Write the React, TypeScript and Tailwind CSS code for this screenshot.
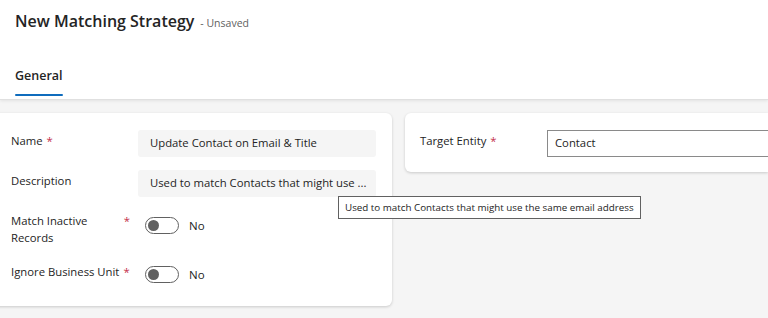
import React from "react";

const font = { fontFamily: '"Open Sans", "Noto Sans", sans-serif' };

const Star = () => <span className="text-[#c4314b] ml-1">*</span>;

const Toggle = () => (
  <div className="flex items-center gap-[10px] ml-[7px]">
    <div className="w-[34px] h-[17px] rounded-full border border-[#616161] bg-white flex items-center px-[2px]">
      <div className="w-[11px] h-[11px] rounded-full bg-[#616161]" />
    </div>
    <span className="text-[11.5px] text-[#242424]">No</span>
  </div>
);

export default function App() {
  return (
    <div className="w-[768px] h-[318px] overflow-hidden bg-[#f5f5f5] text-[#242424]" style={font}>
      <div className="bg-white h-[100px] border-b border-[#e0e0e0] shadow-[0_1px_3px_rgba(0,0,0,0.08)] px-[15px] pt-[9px]">
        <div className="flex items-baseline gap-[6px]">
          <span className="text-[16px] font-semibold">New Matching Strategy</span>
          <span className="text-[10.5px] text-[#616161]">- Unsaved</span>
        </div>
        <div className="mt-[34px] inline-flex flex-col">
          <span className="text-[12.5px] font-semibold leading-[18px]">General</span>
          <div className="mt-[9px] h-[2px] bg-[#0f6cbd] rounded-full" />
        </div>
      </div>

      <div className="flex gap-[13px] mt-[13px] ml-[-8px]">
        <div className="w-[400px] h-[193px] bg-white rounded-[6px] shadow-[0_1px_3px_rgba(0,0,0,0.18)] pl-[19px] pr-[16px] pt-[17px] text-[11.3px]">
          <div className="flex">
            <div className="w-[127px] pt-[3px]">
              Name<Star />
            </div>
            <div className="w-[238px] h-[27px] bg-[#f5f5f5] rounded-[3px] px-[12px] flex items-center whitespace-nowrap">
              Update Contact on Email &amp; Title
            </div>
          </div>
          <div className="flex mt-[13px]">
            <div className="w-[127px] pt-[3px]">Description</div>
            <div className="w-[238px] h-[27px] bg-[#f5f5f5] rounded-[3px] px-[12px] flex items-center relative whitespace-nowrap">
              Used to match Contacts that might use ...
              <div className="absolute left-[200px] top-[26px] z-10 whitespace-nowrap bg-white border border-[#616161] px-[6px] py-[3px] text-[9.8px] leading-[15px]">
                Used to match Contacts that might use the same email address
              </div>
            </div>
          </div>
          <div className="flex mt-[15px]">
            <div className="w-[127px] flex justify-between leading-[17px] pr-[8px]">
              <span>
                Match Inactive
                <br />
                Records
              </span>
              <span className="text-[#c4314b]">*</span>
            </div>
            <div className="pt-[5px]">
              <Toggle />
            </div>
          </div>
          <div className="flex mt-[17px]">
            <div className="w-[127px] leading-[17px]">
              Ignore Business Unit<Star />
            </div>
            <div className="pt-[3px]">
              <Toggle />
            </div>
          </div>
        </div>

        <div className="flex-1 h-[59px] bg-white rounded-l-[6px] shadow-[0_1px_3px_rgba(0,0,0,0.18)] pl-[15px] pt-[17px] text-[11.3px] flex">
          <div className="w-[127px] pt-[3px]">
            Target Entity<Star />
          </div>
          <div className="flex-1 h-[27px] border border-[#8a8a8a] border-r-0 bg-white px-[7px] flex items-center">
            Contact
          </div>
        </div>
      </div>
    </div>
  );
}
